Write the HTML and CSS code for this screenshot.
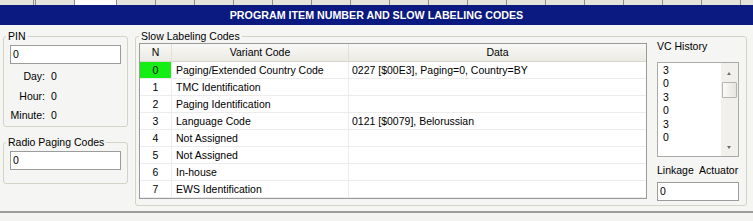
FILE: index.html
```html
<!DOCTYPE html>
<html lang="en">
<head>
    <meta charset="UTF-8">
    <title>Program Item Number and Slow Labeling Codes</title>
    <link rel="stylesheet" href="styles.css">
</head>
<body>
    <div class="tabs">
        <span class="tab first"></span>
        <span class="tab"></span>
        <span class="tab active"></span>
        <span class="tab"></span>
        <span class="tab"></span>
        <span class="tab"></span>
        <span class="tab"></span>
        <span class="tab"></span>
        <span class="tab"></span>
        <span class="tab"></span>
        <span class="tab"></span>
        <span class="tab"></span>
        <span class="tab"></span>
        <span class="tab"></span>
        <span class="tab"></span>
        <span class="tab"></span>
        <span class="tab"></span>
        <span class="tab"></span>
        <span class="tab"></span>
        <span class="tab last"></span>
    </div>

    <div class="title">PROGRAM ITEM NUMBER AND SLOW LABELING CODES</div>

    <div class="main">
        <div class="left">
            <fieldset class="group pin">
                <legend>PIN</legend>
                <div class="field">0</div>
                <div class="times">
                    <div class="trow"><span class="lbl">Day:</span><span>0</span></div>
                    <div class="trow"><span class="lbl">Hour:</span><span>0</span></div>
                    <div class="trow"><span class="lbl">Minute:</span><span>0</span></div>
                </div>
            </fieldset>
            <fieldset class="group rpc">
                <legend>Radio Paging Codes</legend>
                <div class="field">0</div>
            </fieldset>
        </div>

        <fieldset class="group slc">
            <legend>Slow Labeling Codes</legend>
            <div class="slc-body">
                <table class="grid">
                    <colgroup>
                        <col class="c-n">
                        <col class="c-code">
                        <col>
                    </colgroup>
                    <thead>
                        <tr><th>N</th><th>Variant Code</th><th>Data</th></tr>
                    </thead>
                    <tbody id="codes"></tbody>
                </table>
                <div class="side">
                    <div class="side-label">VC History</div>
                    <div class="listbox">
                        <div class="items">
                            <div>3</div><div>0</div><div>3</div><div>0</div><div>3</div><div>0</div>
                        </div>
                        <div class="scroll">
                            <span class="arrow up"></span>
                            <span class="thumb"></span>
                            <span class="arrow down"></span>
                        </div>
                    </div>
                    <div class="side-label link">Linkage&nbsp; Actuator</div>
                    <div class="field">0</div>
                </div>
            </div>
        </fieldset>
    </div>

    <div class="footer"></div>

    <script>
        // Slow labeling variant codes
        const codes = [
            { code: "Paging/Extended Country Code", data: "0227 [$00E3], Paging=0, Country=BY" },
            { code: "TMC Identification", data: "" },
            { code: "Paging Identification", data: "" },
            { code: "Language Code", data: "0121 [$0079], Belorussian" },
            { code: "Not Assigned", data: "" },
            { code: "Not Assigned", data: "" },
            { code: "In-house", data: "" },
            { code: "EWS Identification", data: "" }
        ];
        const current = 0;

        const tbody = document.getElementById('codes');
        codes.forEach((row, i) => {
            const tr = document.createElement('tr');
            tr.innerHTML = `
                <td class="n${i === current ? ' current' : ''}">${i}</td>
                <td>${row.code}</td>
                <td>${row.data}</td>
            `;
            tbody.appendChild(tr);
        });
    </script>
</body>
</html>
```

FILE: styles.css
```css
* {
    margin: 0;
    padding: 0;
    box-sizing: border-box;
}

body {
    width: 753px;
    height: 221px;
    overflow: hidden;
    background: #f5f5f3;
    color: #000;
    font-family: "Liberation Sans", Arial, sans-serif;
    font-size: 10.5px;
}

/* tab strip */
.tabs {
    display: flex;
    height: 5px;
    background: #e4e3dc;
}

.tab {
    flex: 0 0 39px;
    border-right: 1px solid #8f8f8f;
}

.tab.first {
    flex-basis: 36px;
    border-right: 3px double #8f8f8f;
}

.tab.active {
    flex-basis: 42px;
    background: #fcfcfb;
}

.tab.last {
    flex: 1;
    border-right: none;
}

.title {
    height: 20px;
    line-height: 21px;
    background: #0b1a80;
    color: #fff;
    font-weight: bold;
    font-size: 10.7px;
    text-align: center;
}

.main {
    display: flex;
    gap: 7px;
    height: 186px;
    padding: 4px 6px 0 3px;
}

/* group boxes */
.group {
    border: 1px solid #d3d3c6;
    border-radius: 3px;
    min-width: 0;
}

.group legend {
    padding: 1px 2px 0;
    line-height: 13px;
}

.left {
    width: 125px;
    flex-shrink: 0;
}

.pin {
    padding: 2px 6px 0.5px;
}

.pin legend,
.rpc legend {
    margin-left: -4px;
}

.rpc {
    margin-top: 8px;
    padding: 2px 6px 13px;
}

.field {
    height: 19px;
    line-height: 17px;
    padding-left: 2px;
    background: #fff;
    border: 1px solid #9c9c9c;
}

.times {
    margin-top: 3px;
}

.trow {
    display: flex;
    gap: 6px;
    height: 19.5px;
    line-height: 19.5px;
}

.trow .lbl {
    width: 35px;
    text-align: right;
}

.slc {
    flex: 1;
    align-self: flex-start;
    padding: 0 7px 4px 3px;
}

.slc legend {
    margin-left: 0;
}

.slc-body {
    display: flex;
    align-items: flex-start;
    gap: 10px;
}

/* variant code grid */
.grid {
    width: 508px;
    flex-shrink: 0;
    border-collapse: separate;
    border-spacing: 0;
    table-layout: fixed;
    background: #fff;
    border: 1px solid #9a9a9a;
}

.c-n {
    width: 32px;
}

.c-code {
    width: 177px;
}

.grid th {
    height: 18px;
    line-height: 17px;
    padding: 0;
    font-weight: normal;
    background: linear-gradient(#f8f8f6, #ebeae4);
    border-bottom: 1px solid #d6d4cb;
    border-right: 1px solid #e2e0d8;
    text-align: center;
}

.grid td {
    height: 17px;
    line-height: 16px;
    padding: 0 4px;
    border-bottom: 1px solid #ececec;
    border-right: 1px solid #ececec;
    white-space: nowrap;
    overflow: hidden;
}

.grid th:last-child,
.grid td:last-child {
    border-right: none;
}

.grid td:last-child {
    padding-left: 3px;
}

.grid td.n {
    text-align: center;
}

.grid td.current {
    background: #14ee14;
}

/* right side */
.side {
    width: 82px;
    flex-shrink: 0;
}

.side-label {
    margin-top: -3px;
    line-height: 13px;
    margin-bottom: 9px;
}

.side-label.link {
    margin-top: 7px;
    margin-bottom: 5px;
}

.listbox {
    display: flex;
    height: 95px;
    background: #fff;
    border: 1px solid #a9a9a9;
}

.items {
    flex: 1;
    padding: 1px 0 0 5px;
    line-height: 13.4px;
}

.scroll {
    position: relative;
    width: 17px;
    background: #f1f0ec;
}

.arrow {
    position: absolute;
    left: 6px;
    width: 0;
    height: 0;
    border-left: 2.5px solid transparent;
    border-right: 2.5px solid transparent;
}

.arrow.up {
    top: 9px;
    border-bottom: 3px solid #6d6d6d;
}

.arrow.down {
    bottom: 7px;
    border-top: 3px solid #6d6d6d;
}

.thumb {
    position: absolute;
    top: 19px;
    left: 1px;
    width: 15px;
    height: 16px;
    border: 1px solid #b4b4b0;
    border-radius: 1px;
    background: linear-gradient(90deg, #fafaf8, #e6e5df);
}

.footer {
    border-top: 2px solid #9d9d9d;
    height: 10px;
    background: #f3f3f1;
}
```
